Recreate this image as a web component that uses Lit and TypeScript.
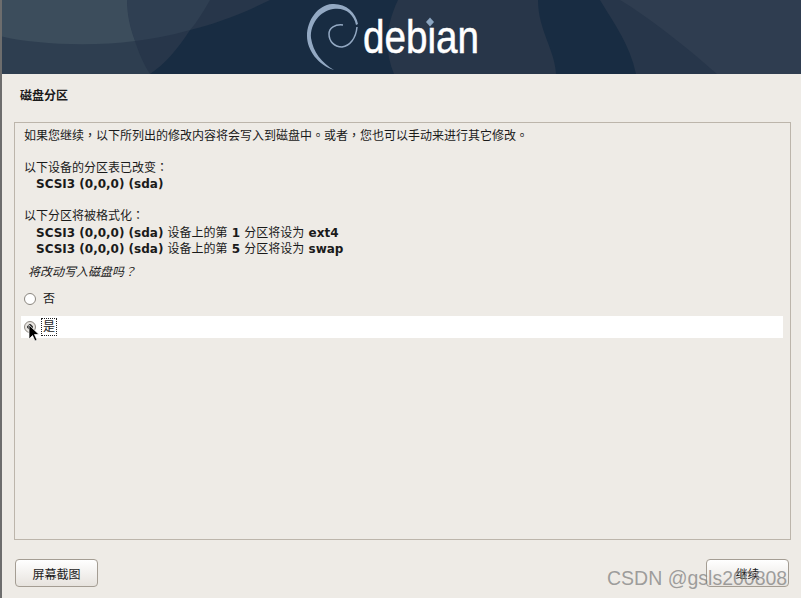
import { LitElement, html, css, svg } from "lit";
import { customElement } from "lit/decorators.js";

@customElement("app-root")
export class AppRoot extends LitElement {
  static styles = css`
    :host { display: flex; flex-direction: column; width: 801px; height: 598px; background: #eeebe6; overflow: hidden; position: relative;
      font-family: "DejaVu Sans", "Noto Sans CJK SC", sans-serif; font-size: 12px; color: #1a1a1a; border-left: 2px solid #6d6d6d; box-sizing: border-box; }
    .banner { height: 74px; flex: none; background: #182c42; }
    .banner svg { display: block; }
    .title { height: 41px; flex: none; padding-left: 18px; display: flex; align-items: center; font-weight: bold; }
    .panel { height: 418px; margin: 7px 10px 0 12px; border: 1px solid #bcb5ab; flex: none; box-sizing: border-box; padding: 5px 9px; line-height: 16px; }
    .gap { height: 16px; }
    .indent { padding-left: 12px; font-weight: bold; }
    .indent span { font-weight: normal; }
    .l2 { margin-top: 1px; }
    .p { font-family: "Noto Sans CJK TC", sans-serif; line-height: 1; }
    .q { font-style: italic; padding-left: 4px; margin-top: 7px; }
    .opt { display: flex; align-items: center; height: 22px; margin: 0 -2px 0 -3px; padding-left: 3px; }
    .opt.first { margin-top: 8px; margin-bottom: 6px; }
    .opt.sel { background: #ffffff; }
    .radio { width: 10px; height: 10px; border-radius: 50%; border: 1px solid #8b867f; background: #fff; margin-right: 5px; flex: none; box-sizing: content-box; }
    .sel .radio { background: radial-gradient(circle, #333 0 2.500px, #e8e5e1 3px); }
    .lab { padding: 0 1px; border: 1px solid transparent; }
    .sel .lab { border: 1px dotted #222; }
    .foot { display: flex; justify-content: space-between; margin: 19px 12px 0 13px; }
    button { width: 83px; height: 28px; border: 1px solid #a49d93; border-radius: 4px; background: linear-gradient(#fff, #e7e3de); font: inherit; color: #1a1a1a; padding: 0; }
    .cursor { position: absolute; left: 26px; top: 324px; }
    .wm { position: absolute; left: 605px; top: 567px; font-family: "Liberation Sans", sans-serif; font-size: 19.500px; color: rgba(130,130,130,0.75); white-space: nowrap; }
  `;

  logo() {
    return svg`
      <rect width="803" height="74" fill="#182c42"/>
      <path d="M0 0H270C244 13 215 24 190 30C177 50 165 64 150 74H0Z" fill="#27364a"/>
      <path d="M0 0H127C128 25 138 55 150 74H0Z" fill="#2e3e50"/>
      <path d="M127 0H210C203 12 197 22 190 30C170 36 150 39 135 41C130 28 127 14 127 0Z" fill="#2f3f52"/>
      <path d="M0 0H127C127 14 130 28 135 41C90 47 30 44 0 36Z" fill="#3c4d5c"/>
      <path d="M398 0C386 25 384 50 394 74H556C555 50 538 30 538 0Z" fill="#283649"/>
      <path d="M600 0H803V74H636C630 45 615 25 600 0Z" fill="#27364a"/>
      <path d="M620 0H803V74H717C690 50 650 18 620 0Z" fill="#2f3d50"/>
      <path d="M358 24C356 12 345 3 332 4C318 5 307 20 307 36C307 50 318 65 334 70C322 63 313 52 311 38C310 24 320 11 333 9C345 7 354 14 356 25Z" fill="#93a9c3"/>
      <path d="M357 27C356 38 350 46 342 47C334 47 329 41 329 34C329 28 335 24 343 25" fill="none" stroke="#93a9c3" stroke-width="1.500"/>
      <text x="363" y="53" font-family="Liberation Sans" font-size="46" fill="#fff" stroke="#fff" stroke-width=".5" textLength="116" lengthAdjust="spacingAndGlyphs">debian</text>
      <rect x="425" y="16" width="10" height="11" fill="#283649"/>
      <path d="M430 17.500L434 22L430 26.500L426 22Z" fill="#8ca6c1"/>
    `;
  }

  render() {
    return html`
      <div class="banner"><svg width="799" height="74" viewBox="2 0 799 74">${this.logo()}</svg></div>
      <div class="title">磁盘分区</div>
      <div class="panel">
        <div>如果您继续<span class="p">，</span>以下所列出的修改内容将会写入到磁盘中<span class="p">。</span>或者<span class="p">，</span>您也可以手动来进行其它修改<span class="p">。</span></div>
        <div class="gap"></div>
        <div>以下设备的分区表已改变<span class="p">：</span></div>
        <div class="indent">SCSI3 (0,0,0) (sda)</div>
        <div class="gap"></div>
        <div>以下分区将被格式化<span class="p">：</span></div>
        <div class="indent l2">SCSI3 (0,0,0) (sda) <span>设备上的第</span> 1 <span>分区将设为</span> ext4</div>
        <div class="indent">SCSI3 (0,0,0) (sda) <span>设备上的第</span> 5 <span>分区将设为</span> swap</div>
        <div class="q">将改动写入磁盘吗<span class="p">？</span></div>
        <div class="opt first"><span class="radio"></span><span class="lab">否</span></div>
        <div class="opt sel"><span class="radio"></span><span class="lab">是</span></div>
      </div>
      <div class="foot"><button>屏幕截图</button><button>继续</button></div>
      <svg class="cursor" width="12" height="18" viewBox="0 0 12 18"><path d="M1 1V15L4.500 11.500L7 17L9 16L6.500 10.500H11Z" fill="#000" stroke="#fff" stroke-width=".7"/></svg>
      <div class="wm">CSDN @gsls200808</div>
    `;
  }
}
